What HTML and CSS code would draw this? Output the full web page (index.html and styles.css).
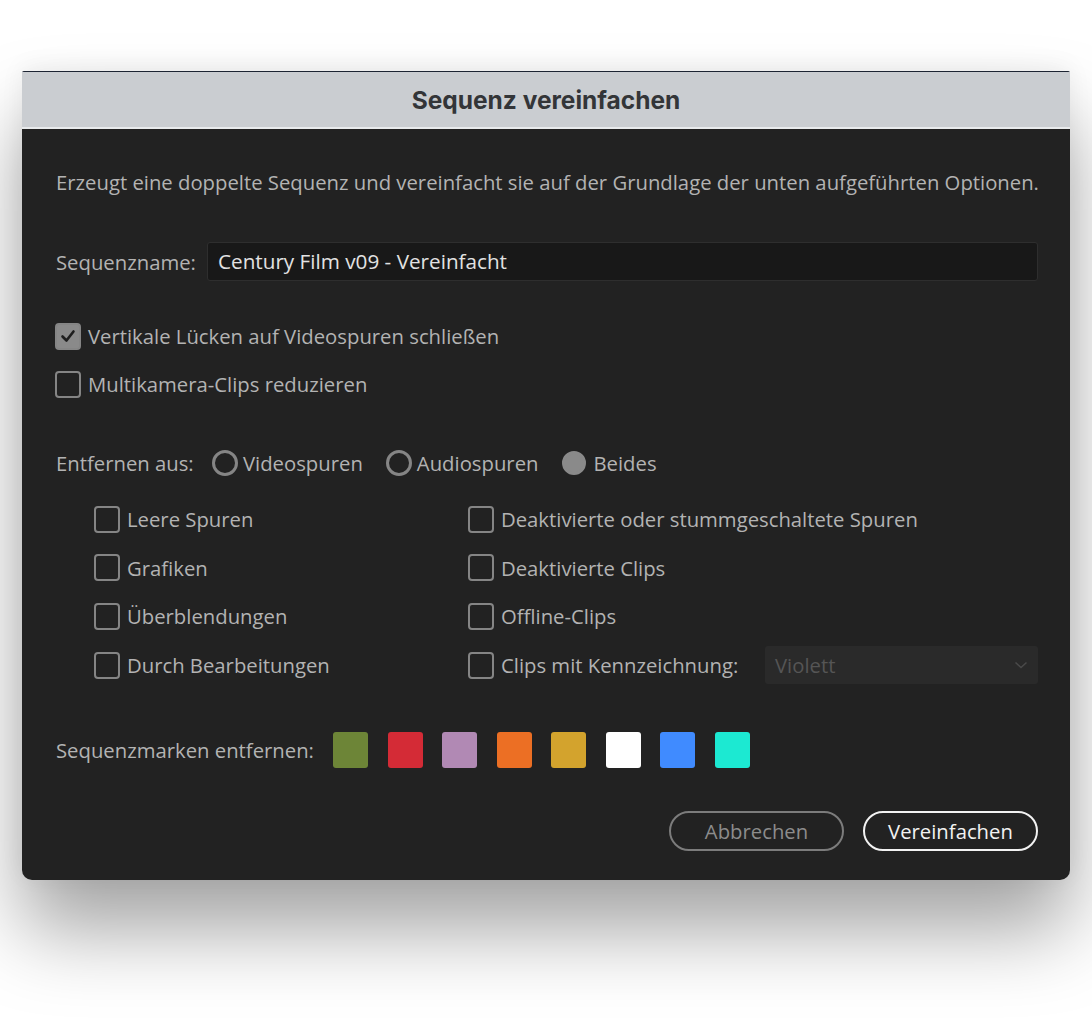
FILE: index.html
```html
<!DOCTYPE html>
<html lang="de">

<head>
    <meta charset="UTF-8">
    <title>Sequenz vereinfachen</title>
    <link rel="stylesheet" href="styles.css">
</head>

<body>
    <div class="dialog">
        <div class="titlebar">Sequenz vereinfachen</div>
        <div class="content">
            <p class="desc">Erzeugt eine doppelte Sequenz und vereinfacht sie auf der Grundlage der unten aufgeführten Optionen.</p>

            <div class="name_row">
                <span class="label">Sequenzname:</span>
                <div class="name_input">Century Film v09 - Vereinfacht</div>
            </div>

            <div class="opt first">
                <span class="cb checked">
                    <svg width="18" height="18" viewBox="0 0 18 18"><path d="M3.5 9.5 L7.5 13.5 L14.5 4.5" fill="none" stroke="#1e1e1e" stroke-width="2.6" stroke-linecap="round" stroke-linejoin="round"/></svg>
                </span>
                <span>Vertikale Lücken auf Videospuren schließen</span>
            </div>
            <div class="opt second">
                <span class="cb"></span>
                <span>Multikamera-Clips reduzieren</span>
            </div>

            <div class="radio_row">
                <span class="label">Entfernen aus:</span>
                <span class="radio"></span><span class="rlabel">Videospuren</span>
                <span class="radio"></span><span class="rlabel">Audiospuren</span>
                <span class="radio on"></span><span class="rlabel">Beides</span>
            </div>

            <div class="grid">
                <div class="opt"><span class="cb"></span><span>Leere Spuren</span></div>
                <div class="opt"><span class="cb"></span><span>Deaktivierte oder stummgeschaltete Spuren</span></div>
                <div class="opt"><span class="cb"></span><span>Grafiken</span></div>
                <div class="opt"><span class="cb"></span><span>Deaktivierte Clips</span></div>
                <div class="opt"><span class="cb"></span><span>Überblendungen</span></div>
                <div class="opt"><span class="cb"></span><span>Offline-Clips</span></div>
                <div class="opt"><span class="cb"></span><span>Durch Bearbeitungen</span></div>
                <div class="opt">
                    <span class="cb"></span><span>Clips mit Kennzeichnung:</span>
                    <div class="select">
                        <span>Violett</span>
                        <svg width="14" height="10" viewBox="0 0 14 10"><path d="M1.5 2.5 L7 7.5 L12.5 2.5" fill="none" stroke="#4a4a4a" stroke-width="1.5"/></svg>
                    </div>
                </div>
            </div>

            <div class="marks">
                <span class="label">Sequenzmarken entfernen:</span>
                <div class="swatches">
                    <span class="sw" style="background:#6d8537"></span>
                    <span class="sw" style="background:#d42b36"></span>
                    <span class="sw" style="background:#b189b4"></span>
                    <span class="sw" style="background:#ec6f24"></span>
                    <span class="sw" style="background:#d3a32d"></span>
                    <span class="sw" style="background:#ffffff"></span>
                    <span class="sw" style="background:#408bff"></span>
                    <span class="sw" style="background:#1ce9d2"></span>
                </div>
            </div>

            <div class="buttons">
                <button class="btn cancel">Abbrechen</button>
                <button class="btn ok">Vereinfachen</button>
            </div>
        </div>
    </div>
</body>

</html>
```

FILE: styles.css
```css
* {
    margin: 0;
    padding: 0;
    box-sizing: border-box;
}

html,
body {
    height: 1024px;
    overflow: hidden;
}

body {
    padding-top: 71px;
    background-color: #ffffff;
    font-family: "Open Sans", "Noto Sans", sans-serif;
}

.dialog {
    width: 1048px;
    margin-left: 22px;
    background-color: #222222;
    border-top: 1px solid #1d2433;
    border-radius: 2px 2px 10px 10px;
    box-shadow: 0 50px 80px rgba(0, 0, 0, 0.36), 0 -4px 24px rgba(0, 0, 0, 0.06);
}

.titlebar {
    height: 57px;
    background-color: #cacdd1;
    border-bottom: 2px solid #e8eaec;
    text-align: center;
    line-height: 56px;
    font-family: Inter, "Liberation Sans", sans-serif;
    font-size: 24.5px;
    font-weight: 700;
    color: #333538;
}

.content {
    padding: 40px 32px 29px 34px;
    color: #b3b3b3;
    font-size: 20.3px;
}

.desc {
    line-height: 26px;
    white-space: nowrap;
}

.label {
    color: #b3b3b3;
}

/* 名称 */
.name_row {
    display: flex;
    align-items: center;
    margin-top: 47px;
}

.name_row .label {
    width: 151px;
}

.name_input {
    flex: 1;
    height: 39px;
    line-height: 37px;
    padding-left: 10px;
    background-color: #181818;
    border: 1px solid #2e2e2e;
    border-radius: 3px;
    color: #e2e2e2;
    font-size: 20.7px;
}

/* 复选框 */
.opt {
    display: flex;
    align-items: center;
    height: 28px;
    white-space: nowrap;
}

.opt.first {
    margin-top: 41px;
    margin-left: -1px;
}

.opt.second {
    margin-top: 20px;
    margin-left: -1px;
}

.cb {
    display: flex;
    align-items: center;
    justify-content: center;
    width: 26px;
    height: 27px;
    margin-right: 7px;
    border: 2.5px solid #858585;
    border-radius: 4px;
    flex-shrink: 0;
}

.cb.checked {
    background-color: #8a8a8a;
}

/* 单选 */
.radio_row {
    display: flex;
    align-items: center;
    height: 28px;
    margin-top: 51px;
}

.radio_row .label {
    width: 156px;
}

.radio {
    width: 26px;
    height: 26px;
    border: 3px solid #858585;
    border-radius: 50%;
    margin-right: 5px;
    flex-shrink: 0;
}

.radio.on {
    width: 24px;
    height: 24px;
    background-color: #8a8a8a;
    border-color: #8a8a8a;
    margin-left: 1px;
    margin-right: 7px;
}

.rlabel {
    margin-right: 23px;
}

.grid {
    display: grid;
    grid-template-columns: 374px 1fr;
    grid-auto-rows: 28px;
    row-gap: 20.7px;
    margin-top: 28px;
    padding-left: 38px;
}

.select {
    display: flex;
    align-items: center;
    justify-content: space-between;
    width: 273px;
    height: 38px;
    margin-left: auto;
    padding: 0 10px;
    background-color: #2a2a2a;
    border-radius: 3px;
    color: #555555;
}

/* 标记 */
.marks {
    display: flex;
    align-items: center;
    margin-top: 53px;
}

.marks .label {
    width: 277px;
}

.swatches {
    display: flex;
    gap: 19.5px;
}

.sw {
    width: 35px;
    height: 36px;
    border-radius: 3px;
}

.buttons {
    display: flex;
    justify-content: flex-end;
    gap: 19px;
    margin-top: 43px;
}

.btn {
    width: 175px;
    height: 40px;
    border-radius: 20px;
    background-color: transparent;
    font-family: "Open Sans", "Noto Sans", sans-serif;
    font-size: 20.3px;
}

.btn.cancel {
    border: 2px solid #7c7c7c;
    color: #8c8c8c;
}

.btn.ok {
    border: 2px solid #f2f2f2;
    color: #f2f2f2;
}
```
